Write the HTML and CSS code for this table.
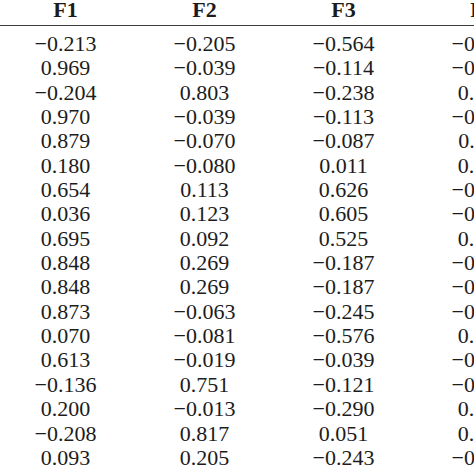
FILE: index.html
```html
<!DOCTYPE html>
<html lang="en">
<head>
  <meta charset="UTF-8">
  <meta name="viewport" content="width=device-width, initial-scale=1.0">
  <title>Factor loadings</title>
  <link rel="stylesheet" href="styles.css">
</head>
<body>
  <table class="loadings">
    <thead>
      <tr>
        <th>F1</th>
        <th>F2</th>
        <th>F3</th>
        <th>F4</th>
      </tr>
    </thead>
    <tbody>
      <tr><td>−0.213</td><td>−0.205</td><td>−0.564</td><td>−0.043</td></tr>
      <tr><td>0.969</td><td>−0.039</td><td>−0.114</td><td>−0.021</td></tr>
      <tr><td>−0.204</td><td>0.803</td><td>−0.238</td><td>0.152</td></tr>
      <tr><td>0.970</td><td>−0.039</td><td>−0.113</td><td>−0.021</td></tr>
      <tr><td>0.879</td><td>−0.070</td><td>−0.087</td><td>0.114</td></tr>
      <tr><td>0.180</td><td>−0.080</td><td>0.011</td><td>0.862</td></tr>
      <tr><td>0.654</td><td>0.113</td><td>0.626</td><td>−0.095</td></tr>
      <tr><td>0.036</td><td>0.123</td><td>0.605</td><td>−0.148</td></tr>
      <tr><td>0.695</td><td>0.092</td><td>0.525</td><td>0.071</td></tr>
      <tr><td>0.848</td><td>0.269</td><td>−0.187</td><td>−0.066</td></tr>
      <tr><td>0.848</td><td>0.269</td><td>−0.187</td><td>−0.066</td></tr>
      <tr><td>0.873</td><td>−0.063</td><td>−0.245</td><td>−0.102</td></tr>
      <tr><td>0.070</td><td>−0.081</td><td>−0.576</td><td>0.318</td></tr>
      <tr><td>0.613</td><td>−0.019</td><td>−0.039</td><td>−0.054</td></tr>
      <tr><td>−0.136</td><td>0.751</td><td>−0.121</td><td>−0.037</td></tr>
      <tr><td>0.200</td><td>−0.013</td><td>−0.290</td><td>0.701</td></tr>
      <tr><td>−0.208</td><td>0.817</td><td>0.051</td><td>0.133</td></tr>
      <tr><td>0.093</td><td>0.205</td><td>−0.243</td><td>−0.088</td></tr>
    </tbody>
  </table>
</body>
</html>
```

FILE: styles.css
```css
body{
  margin: 0;
  background: #fff;
  overflow: hidden;
}
.loadings{
  border-collapse: collapse;
  margin: 0 0 0 -4px;
  width: 556px;
  table-layout: fixed;
  font-family: "Liberation Serif", "DejaVu Serif", serif;
  font-size: 22px;
  line-height: 24.35px;
  color: #1c1c1c;
}
.loadings th,
.loadings td{
  width: 139px;
  padding: 0;
  text-align: center;
  white-space: nowrap;
}
.loadings th{
  font-weight: bold;
  line-height: 19px;
  padding-bottom: 6px;
  border-bottom: 1px solid #3a3a3a;
}
/* 첫 줄은 가로줄에서 조금 띄움 */
.loadings tbody tr:first-child td{
  padding-top: 6px;
}
```
